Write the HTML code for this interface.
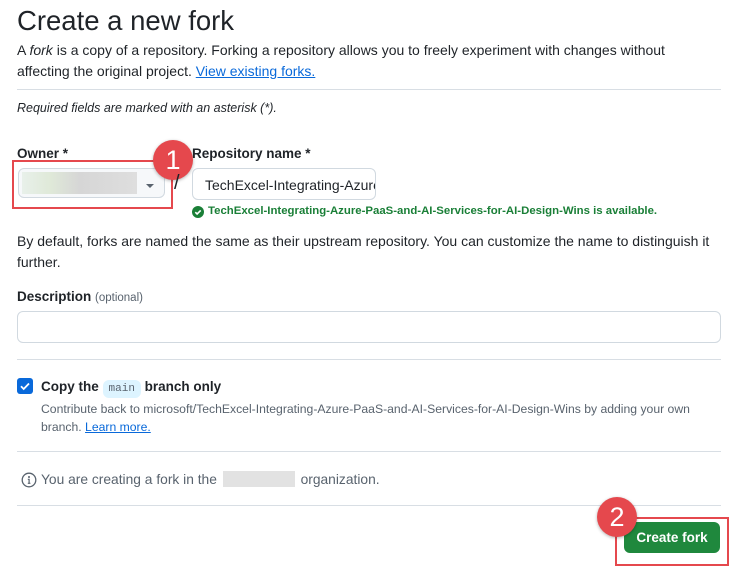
<!DOCTYPE html>
<html><head><style>
body{margin:0;width:741px;height:560px;background:#fff;font-family:"Liberation Sans",Arial,sans-serif;color:#1f2328;position:relative;overflow:hidden}
.a{position:absolute;white-space:nowrap}
.hr{position:absolute;left:17px;width:704px;height:1px;background:#d8dee4}
.badge{position:absolute;width:40px;height:40px;border-radius:50%;background:#e5484d;color:#fff;font-size:27px;text-align:center;line-height:40px;box-shadow:0 1px 3px rgba(0,0,0,.3)}
.red{position:absolute;border:2px solid #e5484d}
</style></head><body>
<div class="a" style="left:17px;top:5px;font-size:27.5px">Create a new fork</div>
<div class="a" style="left:17px;top:40px;font-size:14px;line-height:21px">A <i>fork</i> is a copy of a repository. Forking a repository allows you to freely experiment with changes without<br>affecting the original project. <span style="color:#0969da;text-decoration:underline">View existing forks.</span></div>
<div class="hr" style="top:89px"></div>
<div class="a" style="left:17px;top:101px;font-size:12.5px;font-style:italic">Required fields are marked with an asterisk (*).</div>
<div class="a" style="left:17px;top:146px;font-size:13.5px;font-weight:bold">Owner *</div>
<div class="a" style="left:18px;top:168px;width:147px;height:30px;border:1px solid #d1d9e0;border-radius:6px;background:#f6f8fa;box-sizing:border-box"></div>
<div class="a" style="left:22px;top:172px;width:115px;height:22px;background:linear-gradient(90deg,#e8f0ea,#dfe9d8 25%,#d6d6d6 50%,#dedede)"></div>
<div class="a" style="left:146px;top:184px;width:0;height:0;border-left:4px solid transparent;border-right:4px solid transparent;border-top:4px solid #59636e"></div>
<div class="red" style="left:12px;top:160px;width:157px;height:45px"></div>
<div class="badge" style="left:153px;top:140px">1</div>
<div class="a" style="left:174px;top:172px;font-size:20px">/</div>
<div class="a" style="left:192px;top:146px;font-size:13.5px;font-weight:bold">Repository name *</div>
<div class="a" style="left:192px;top:168px;width:184px;height:32px;border:1px solid #d1d9e0;border-radius:6px;box-sizing:border-box;overflow:hidden;font-size:14px;padding:8px 0 0 12px">TechExcel-Integrating-Azure</div>
<svg class="a" style="left:192px;top:206px" width="12" height="12" viewBox="0 0 12 12"><circle cx="6" cy="6" r="6" fill="#1a7f37"/><path d="M3.3 6.2l1.8 1.8 3.6-3.6" stroke="#fff" stroke-width="1.6" fill="none"/></svg>
<div class="a" style="left:208px;top:205px;font-size:11.4px;font-weight:bold;color:#1a7f37">TechExcel-Integrating-Azure-PaaS-and-AI-Services-for-AI-Design-Wins is available.</div>
<div class="a" style="left:17px;top:231px;font-size:14px;line-height:21px">By default, forks are named the same as their upstream repository. You can customize the name to distinguish it<br>further.</div>
<div class="a" style="left:17px;top:289px;font-size:13.5px;font-weight:bold">Description <span style="font-weight:normal;font-size:11.5px;color:#59636e">(optional)</span></div>
<div class="a" style="left:17px;top:311px;width:704px;height:32px;border:1px solid #d1d9e0;border-radius:6px;box-sizing:border-box"></div>
<div class="hr" style="top:359px"></div>
<div class="a" style="left:17px;top:378px;width:16px;height:16px;background:#0969da;border-radius:3px"></div>
<svg class="a" style="left:17px;top:378px" width="16" height="16"><path d="M4 8.3l2.7 2.7 5.3-5.5" stroke="#fff" stroke-width="1.8" fill="none"/></svg>
<div class="a" style="left:41px;top:379px;font-size:13.5px;font-weight:bold">Copy the <span style="font-family:'Liberation Mono',monospace;font-weight:normal;font-size:11px;background:#ddf4ff;border-radius:6px;padding:3px 6px;color:#59636e">main</span> branch only</div>
<div class="a" style="left:41px;top:400px;font-size:12.2px;line-height:18px;color:#59636e">Contribute back to microsoft/TechExcel-Integrating-Azure-PaaS-and-AI-Services-for-AI-Design-Wins by adding your own<br>branch. <span style="color:#0969da;text-decoration:underline">Learn more.</span></div>
<div class="hr" style="top:451px"></div>
<svg class="a" style="left:21px;top:472px" width="16" height="16" viewBox="0 0 16 16"><circle cx="8" cy="8" r="6.8" stroke="#59636e" stroke-width="1.3" fill="none"/><circle cx="8" cy="5" r="1" fill="#59636e"/><path d="M6.8 7.3h1.3v4M6.8 11.3h2.6" stroke="#59636e" stroke-width="1.2" fill="none"/></svg>
<div class="a" style="left:41px;top:471px;font-size:13.8px;color:#59636e">You are creating a fork in the <span style="display:inline-block;width:72px;height:16px;background:#e2e2e2;vertical-align:-3px;margin:0 2px"></span> organization.</div>
<div class="hr" style="top:505px"></div>
<div class="a" style="left:624px;top:522px;width:96px;height:31px;background:#1f883d;border-radius:6px;color:#fff;font-size:13.5px;font-weight:bold;text-align:center;line-height:31px">Create fork</div>
<div class="red" style="left:615px;top:517px;width:110px;height:45px"></div>
<div class="badge" style="left:597px;top:497px">2</div>
</body></html>
